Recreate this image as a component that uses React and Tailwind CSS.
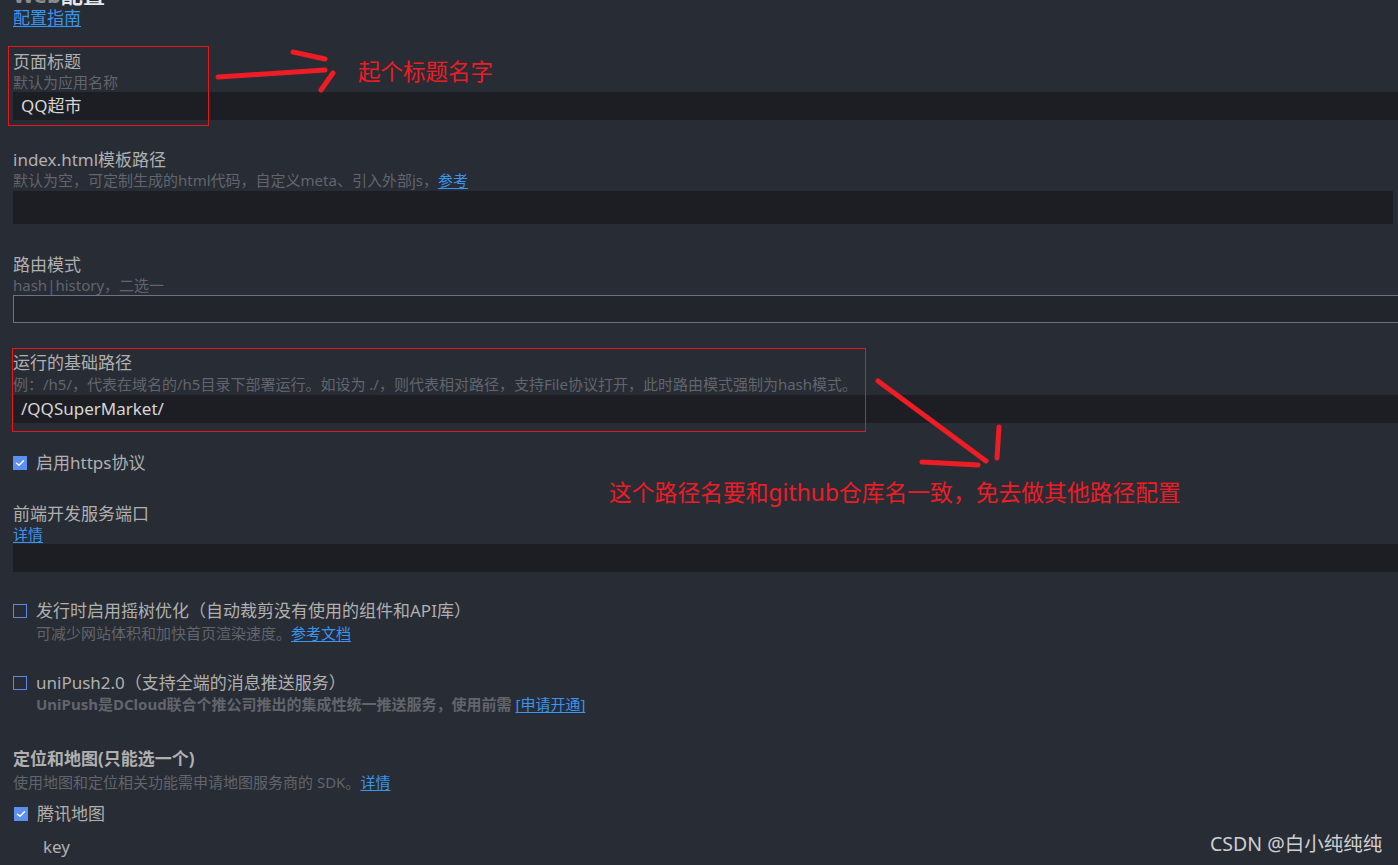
import React from "react";

const FONT = { fontFamily: "'Noto Sans','Noto Sans CJK SC',sans-serif" };

function Label({ children, className = "" }) {
  return <div className={"h-[20px] text-[17px] leading-[20px] text-[#b0b0b0] whitespace-nowrap " + className}>{children}</div>;
}
function Sub({ children, className = "" }) {
  return <div className={"h-[20px] text-[15px] leading-[20px] text-[#62656c] whitespace-nowrap " + className}>{children}</div>;
}
function Link({ children, className = "" }) {
  return <span className={"text-[#3a95ef] underline underline-offset-2 " + className}>{children}</span>;
}
function Input({ value, className = "h-[28px] w-[1390px]" }) {
  return (
    <div className={"flex items-center bg-[#1d1e23] pl-[8px] text-[17px] text-[#d6d6d6] " + className}>{value}</div>
  );
}
function CheckBox({ checked }) {
  if (checked)
    return (
      <svg width="14" height="14" viewBox="0 0 14 14" className="shrink-0">
        <rect x="0" y="0" width="14" height="14" fill="#5b8ff0" />
        <path d="M3.5 7.2 L6 9.3 L10.5 4.8" stroke="#fff" strokeWidth="1.5" fill="none" strokeLinecap="round" strokeLinejoin="round" />
      </svg>
    );
  return <div className="h-[14px] w-[14px] shrink-0 border border-[#5a8be4]" />;
}
function CheckRow({ checked, children, className = "" }) {
  return (
    <div className={"flex h-[20px] items-center gap-[9px] text-[17px] leading-[20px] text-[#b0b0b0] whitespace-nowrap " + className}>
      <CheckBox checked={checked} />
      <span>{children}</span>
    </div>
  );
}

export default function App() {
  return (
    <div className="relative h-[865px] w-[1398px] overflow-hidden bg-[#282c35] pl-[13px]" style={FONT}>
      <div className="-mt-[16px] h-[21px] text-[22px] font-bold leading-[21px] text-[#e8e8e8] whitespace-nowrap">
        <span className="text-[#8a8c90]">Web</span>配置
      </div>
      <div className="mt-[3px] h-[20px] text-[17px] leading-[20px]"><Link>配置指南</Link></div>

      <Label className="mt-[24px]">页面标题</Label>
      <Sub>默认为应用名称</Sub>
      <Input value="QQ超市" />

      <Label className="mt-[30px]">index.html模板路径</Label>
      <Sub>默认为空，可定制生成的html代码，自定义meta、引入外部js，<Link>参考</Link></Sub>
      <Input value="" className="mt-[1px] h-[33px] w-[1380px]" />

      <Label className="mt-[31px]">路由模式</Label>
      <Sub>hash|history，二选一</Sub>
      <div className="h-[28px] w-[1390px] border border-[#6c7284] bg-[#22252c]" />

      <Label className="mt-[30px]">运行的基础路径</Label>
      <Sub className="mt-[1px]">例：/h5/，代表在域名的/h5目录下部署运行。如设为 ./，则代表相对路径，支持File协议打开，此时路由模式强制为hash模式。</Sub>
      <Input value="/QQSuperMarket/" className="mt-[1px] h-[28px] w-[1390px]" />

      <CheckRow checked className="mt-[30px]">启用https协议</CheckRow>

      <Label className="mt-[31px]">前端开发服务端口</Label>
      <div className="h-[20px] text-[15px] leading-[20px]"><Link>详情</Link></div>
      <Input value="" />

      <CheckRow className="mt-[29px]">发行时启用摇树优化（自动裁剪没有使用的组件和API库）</CheckRow>
      <Sub className="mt-[2px] pl-[23px]">可减少网站体积和加快首页渲染速度。<Link>参考文档</Link></Sub>

      <CheckRow className="mt-[30px]">uniPush2.0（支持全端的消息推送服务）</CheckRow>
      <Sub className="mt-[1px] pl-[23px]"><span className="font-bold">UniPush是DCloud联合个推公司推出的集成性统一推送服务，使用前需</span> <Link>[申请开通]</Link></Sub>

      <div className="mt-[35px] h-[20px] text-[17px] font-bold leading-[20px] text-[#b0b0b0] whitespace-nowrap">定位和地图(只能选一个)</div>
      <Sub className="mt-[3px]">使用地图和定位相关功能需申请地图服务商的 SDK。<Link>详情</Link></Sub>
      <CheckRow checked className="mt-[12px] pl-[1px]">腾讯地图</CheckRow>
      <Label className="mt-[13px] pl-[30px]">key</Label>

      {/* annotations */}
      <div className="pointer-events-none absolute left-[8px] top-[46px] h-[80px] w-[201px] border border-[#e81818]" />
      <div className="pointer-events-none absolute left-[12px] top-[348px] h-[84px] w-[854px] border border-[#e81818]" />
      <svg className="pointer-events-none absolute left-0 top-0" width="1398" height="865">
        <g stroke="#ee1c25" strokeWidth="5" strokeLinecap="round" fill="none">
          <line x1="218" y1="77" x2="325" y2="70" />
          <line x1="293" y1="52" x2="325" y2="59" />
          <line x1="333" y1="73" x2="321" y2="90" />
          <line x1="878" y1="381" x2="986" y2="461" />
          <line x1="922" y1="462" x2="978" y2="465" />
          <line x1="999" y1="427" x2="997" y2="458" />
        </g>
      </svg>
      <div className="pointer-events-none absolute left-[358px] top-[57px] text-[22.5px] leading-[30px] text-[#ee1c25] whitespace-nowrap">起个标题名字</div>
      <div className="pointer-events-none absolute left-[609px] top-[478px] text-[22.8px] leading-[30px] text-[#ee1c25] whitespace-nowrap">这个路径名要和github仓库名一致，免去做其他路径配置</div>
      <div className="pointer-events-none absolute left-[1210px] top-[831px] text-[19.5px] leading-[26px] text-[#cfd0d2] whitespace-nowrap">CSDN @白小纯纯纯</div>
    </div>
  );
}
